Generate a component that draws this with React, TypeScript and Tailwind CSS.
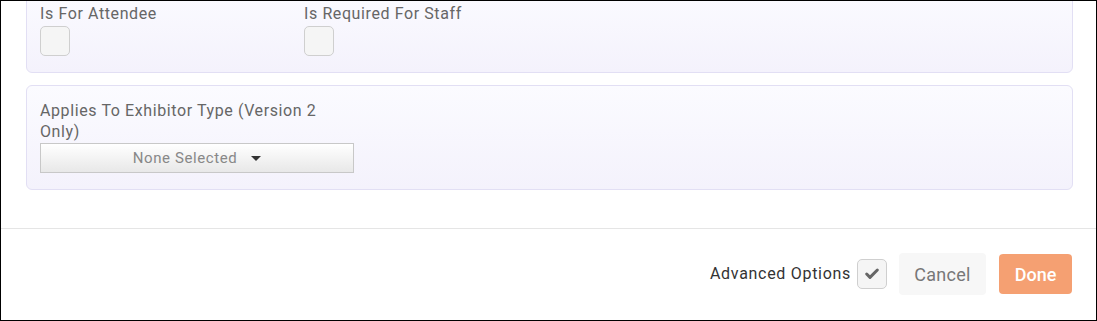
import { Check } from "lucide-react";

const font = { fontFamily: "Roboto, 'Liberation Sans', sans-serif" };

function Box({ checked = false }: { checked?: boolean }) {
  return (
    <div className="flex h-[30px] w-[30px] items-center justify-center rounded-[5px] border border-[#cfcfcf] bg-[#f5f5f5]">
      {checked && <Check className="h-[16px] w-[16px] text-[#666]" strokeWidth={4.5} />}
    </div>
  );
}

export default function App() {
  return (
    <div
      className="flex h-[321px] w-[1097px] flex-col overflow-hidden border border-black bg-white"
      style={font}
    >
      <div className="flex flex-col px-[25px] pr-[23px]">
        <div className="-mt-[13px] flex rounded-[6px] border border-[#e2dff4] bg-gradient-to-b from-[#fbfbff] to-[#f4f2fc] px-[13px] pb-[16px] pt-[14px]">
          <div className="flex w-[264px] flex-col gap-[2px]">
            <span className="text-[16px] leading-[21px] tracking-[0.6px] text-[#666]">Is For Attendee</span>
            <Box />
          </div>
          <div className="flex flex-col gap-[2px]">
            <span className="text-[16px] leading-[21px] tracking-[0.6px] text-[#666]">Is Required For Staff</span>
            <Box />
          </div>
        </div>

        <div className="mt-[12px] flex rounded-[6px] border border-[#e2dff4] bg-gradient-to-b from-[#fbfbff] to-[#f4f2fc] px-[13px] pb-[16px] pt-[14px]">
          <div className="flex w-[314px] flex-col">
            <span className="text-[16px] leading-[21px] tracking-[0.6px] text-[#666]">
              Applies To Exhibitor Type (Version 2 Only)
            </span>
            <button className="mt-px flex h-[30px] w-[314px] items-center justify-center gap-[14px] border border-[#c8c8c8] bg-gradient-to-b from-white to-[#e8e8e8] text-[15px] tracking-[0.6px] text-[#888]">
              None Selected
              <span className="h-0 w-0 border-x-[5px] border-t-[5px] border-x-transparent border-t-[#333]" />
            </button>
          </div>
        </div>
      </div>

      <div className="mt-[38px] border-t border-[#e5e5e5]" />

      <div className="flex items-center justify-end gap-[12px] pr-[24px] pt-[24px]">
        <div className="flex items-center gap-[6px]">
          <span className="text-[16px] tracking-[0.7px] text-[#333]">Advanced Options</span>
          <Box checked />
        </div>
        <button className="h-[42px] w-[87px] rounded-[4px] bg-[#f7f7f7] text-[18px] tracking-[0.3px] text-[#777]">
          Cancel
        </button>
        <button className="ml-px h-[40px] w-[73px] rounded-[4px] bg-[#f5a072] text-[18px] font-medium text-white">
          Done
        </button>
      </div>
    </div>
  );
}
